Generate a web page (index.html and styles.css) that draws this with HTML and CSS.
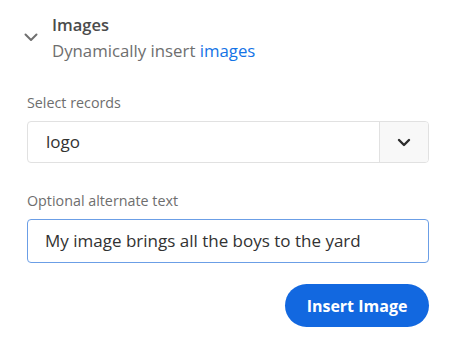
FILE: index.html
```html
<!DOCTYPE html>
<html>
<head>
<meta charset="utf-8">
<link rel="stylesheet" href="styles.css">
</head>
<body>
<div class="panel">
  <div class="header">
    <svg class="toggle" width="14" height="9" viewBox="0 0 14 9"><path d="M1.5 1.5 L7 7 L12.5 1.5" fill="none" stroke="#707070" stroke-width="2" stroke-linecap="round" stroke-linejoin="round"/></svg>
    <div class="titles">
      <div class="title">Images</div>
      <div class="subtitle">Dynamically insert <span class="link">images</span></div>
    </div>
  </div>
  <div class="field field-select">
    <div class="label">Select records</div>
    <div class="select">
      <div class="select-value">logo</div>
      <div class="select-btn">
        <svg width="14" height="9" viewBox="0 0 14 9"><path d="M2 2 L7 7 L12 2" fill="none" stroke="#2c2c2c" stroke-width="2.4" stroke-linecap="round" stroke-linejoin="round"/></svg>
      </div>
    </div>
  </div>
  <div class="field field-text">
    <div class="label">Optional alternate text</div>
    <div class="input">My image brings all the boys to the yard</div>
  </div>
  <div class="actions">
    <div class="button">Insert Image</div>
  </div>
</div>
</body>
</html>
```
FILE: styles.css
```css
html, body {
  margin: 0;
  padding: 0;
  background: #ffffff;
}
body {
  font-family: "Open Sans", "Noto Sans", sans-serif;
  color: #4b4b4b;
}
.panel {
  width: 402px;
  padding: 13px 0 0 27px;
}
.header {
  display: flex;
  align-items: flex-start;
}
.toggle {
  margin: 20px 0 0 -3px;
  flex: none;
}
.titles {
  margin-left: 14px;
}
.title {
  font-size: 16.5px;
  font-weight: 600;
  color: #4b4b4b;
  line-height: 24px;
}
.subtitle {
  font-size: 16.8px;
  color: #6e6e6e;
  line-height: 28px;
}
.link {
  color: #1473e6;
}
.field-select {
  margin-top: 28px;
}
.field-text {
  margin-top: 28px;
}
.label {
  font-size: 14.3px;
  color: #6e6e6e;
  line-height: 20px;
  margin-bottom: 8px;
}
.select {
  display: flex;
  height: 42px;
  border: 1px solid #e1e1e1;
  border-radius: 4px;
  box-sizing: border-box;
  overflow: hidden;
}
.select-value {
  flex: 1;
  padding-left: 18px;
  font-size: 17px;
  line-height: 40px;
  color: #323232;
}
.select-btn {
  width: 48px;
  border-left: 1px solid #e1e1e1;
  background: #f8f8f8;
  display: flex;
  align-items: center;
  justify-content: center;
}
.input {
  height: 44px;
  box-sizing: border-box;
  border: 1.5px solid #6b9ee6;
  border-radius: 4px;
  padding-left: 17px;
  font-size: 17px;
  line-height: 41px;
  color: #323232;
}
.actions {
  display: flex;
  justify-content: flex-end;
  margin-top: 21px;
}
.button {
  width: 144px;
  height: 43px;
  border-radius: 22px;
  background: #1268e0;
  color: #ffffff;
  font-size: 16px;
  font-weight: 700;
  display: flex;
  align-items: center;
  justify-content: center;
}
```
